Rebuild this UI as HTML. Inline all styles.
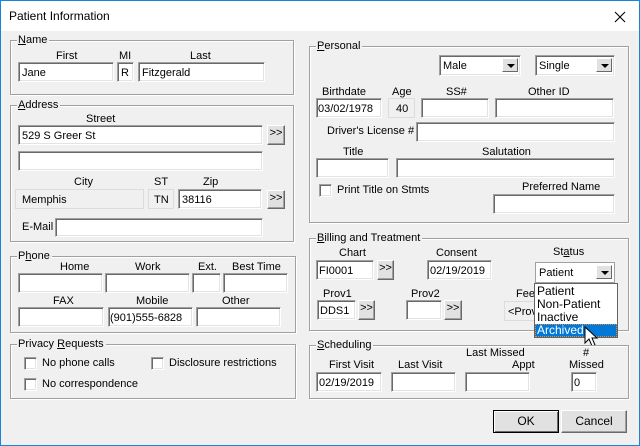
<!DOCTYPE html>
<html><head><style>
*{box-sizing:border-box;margin:0;padding:0}
body{width:640px;height:446px;overflow:hidden;background:#f0f0f0;font-family:"Liberation Sans",sans-serif;font-size:11px;color:#000;position:relative}
#frame{position:absolute;left:0;top:0;width:640px;height:446px;border:1px solid #1883d7;border-top:1px solid #1883d7}
#title{position:absolute;left:1px;top:1px;width:638px;height:30px;background:#fff}
#title span{position:absolute;left:8px;top:8px;font-size:12px}
.a{position:absolute;white-space:nowrap}
.g{position:absolute;border:1px solid #a0a0a0;box-shadow:1px 1px 0 #fff,inset 1px 1px 0 #fff}
.gl{position:absolute;top:-7px;left:6px;background:#f0f0f0;padding:0 2px 0 1px;line-height:12px}
.i{position:absolute;background:#fff;border:1px solid;border-color:#a0a0a0 #fff #fff #a0a0a0;box-shadow:inset 1px 1px 0 #696969,inset -1px -1px 0 #e3e3e3;padding:3px 0 0 3px;font-size:11px;line-height:14px;white-space:nowrap;overflow:hidden}
.d{background:#f0f0f0;box-shadow:none;border-color:#dcdcdc;}
.b{position:absolute;background:#e1e1e1;border:1px solid;border-color:#fff #696969 #696969 #fff;box-shadow:inset -1px -1px 0 #a0a0a0;font-size:11px;text-align:center;line-height:15px}
.c{position:absolute;width:13px;height:13px;background:#fff;border:1px solid;border-color:#a0a0a0 #fff #fff #a0a0a0;box-shadow:inset 1px 1px 0 #696969,inset -1px -1px 0 #e3e3e3}
.cb .ar{position:absolute;right:2px;top:2px;width:16px;height:14px;background:#e1e1e1;border:1px solid;border-color:#fff #696969 #696969 #fff}
.cb .ar:after{content:"";position:absolute;left:4px;top:5px;border-left:4px solid transparent;border-right:4px solid transparent;border-top:4px solid #000}
</style></head><body>
<div id="title"><span>Patient Information</span>
<svg style="position:absolute;left:613px;top:10px" width="12" height="12"><path d="M1 1L11 11M11 1L1 11" stroke="#000" stroke-width="1.1"/></svg></div>

<div class="g" style="left:10px;top:40px;width:284px;height:55px"><span class="gl"><u>N</u>ame</span></div>
<div class="a" style="left:56px;top:50px">First</div>
<div class="a" style="left:119px;top:50px">MI</div>
<div class="a" style="left:190px;top:50px">Last</div>
<div class="i" style="left:18px;top:62px;width:96px;height:20px">Jane</div>
<div class="i" style="left:117px;top:62px;width:17px;height:20px">R</div>
<div class="i" style="left:138px;top:62px;width:127px;height:20px">Fitzgerald</div>

<div class="g" style="left:10px;top:105px;width:284px;height:137px"><span class="gl"><u>A</u>ddress</span></div>
<div class="a" style="left:86px;top:113px">Street</div>
<div class="i" style="left:18px;top:125px;width:245px;height:20px">529 S Greer St</div>
<div class="b" style="left:267px;top:125px;width:18px;height:20px">&gt;&gt;</div>
<div class="i" style="left:18px;top:151px;width:245px;height:20px"></div>
<div class="a" style="left:74px;top:176px">City</div>
<div class="a" style="left:154px;top:176px">ST</div>
<div class="a" style="left:203px;top:176px">Zip</div>
<div class="i d" style="left:15px;top:189px;width:129px;height:20px;padding-left:6px">Memphis</div>
<div class="i d" style="left:148px;top:189px;width:26px;height:20px;padding-left:5px">TN</div>
<div class="i" style="left:178px;top:189px;width:84px;height:20px">38116</div>
<div class="b" style="left:267px;top:190px;width:18px;height:19px">&gt;&gt;</div>
<div class="a" style="left:22px;top:221px">E-Mail</div>
<div class="i" style="left:55px;top:218px;width:208px;height:19px"></div>

<div class="g" style="left:10px;top:256px;width:286px;height:77px"><span class="gl">P<u>h</u>one</span></div>
<div class="a" style="left:60px;top:261px">Home</div>
<div class="a" style="left:135px;top:261px">Work</div>
<div class="a" style="left:198px;top:261px">Ext.</div>
<div class="a" style="left:232px;top:261px">Best Time</div>
<div class="i" style="left:18px;top:273px;width:85px;height:20px"></div>
<div class="i" style="left:105px;top:273px;width:85px;height:20px"></div>
<div class="i" style="left:192px;top:273px;width:29px;height:20px"></div>
<div class="i" style="left:223px;top:273px;width:65px;height:20px"></div>
<div class="a" style="left:53px;top:295px">FAX</div>
<div class="a" style="left:136px;top:295px">Mobile</div>
<div class="a" style="left:222px;top:295px">Other</div>
<div class="i" style="left:18px;top:307px;width:86px;height:20px"></div>
<div class="i" style="left:108px;top:307px;width:85px;height:20px;padding-left:1px">(901)555-6828</div>
<div class="i" style="left:196px;top:307px;width:85px;height:20px"></div>

<div class="g" style="left:10px;top:344px;width:286px;height:55px"><span class="gl">Privacy <u>R</u>equests</span></div>
<div class="c" style="left:24px;top:357px"></div><div class="a" style="left:42px;top:357px">No phone calls</div>
<div class="c" style="left:151px;top:357px"></div><div class="a" style="left:169px;top:357px">Disclosure restrictions</div>
<div class="c" style="left:24px;top:378px"></div><div class="a" style="left:42px;top:378px">No correspondence</div>

<div class="g" style="left:309px;top:46px;width:320px;height:177px"><span class="gl"><u>P</u>ersonal</span></div>
<div class="i cb" style="left:439px;top:55px;width:82px;height:21px">Male<div class="ar"></div></div>
<div class="i cb" style="left:535px;top:55px;width:80px;height:21px">Single<div class="ar"></div></div>
<div class="a" style="left:322px;top:86px">Birthdate</div>
<div class="a" style="left:392px;top:86px">Age</div>
<div class="a" style="left:446px;top:86px">SS#</div>
<div class="a" style="left:528px;top:86px">Other ID</div>
<div class="i" style="left:316px;top:98px;width:66px;height:20px;padding-left:1px">03/02/1978</div>
<div class="i d" style="left:388px;top:98px;width:27px;height:20px;padding-left:7px">40</div>
<div class="i" style="left:421px;top:98px;width:68px;height:20px"></div>
<div class="i" style="left:495px;top:98px;width:119px;height:20px"></div>
<div class="a" style="left:327px;top:125px">Driver's License #</div>
<div class="i" style="left:416px;top:122px;width:199px;height:20px"></div>
<div class="a" style="left:343px;top:146px">Title</div>
<div class="a" style="left:482px;top:146px">Salutation</div>
<div class="i" style="left:316px;top:158px;width:73px;height:20px"></div>
<div class="i" style="left:396px;top:158px;width:219px;height:20px"></div>
<div class="c" style="left:319px;top:184px"></div><div class="a" style="left:337px;top:184px">Print Title on Stmts</div>
<div class="a" style="left:522px;top:181px">Preferred Name</div>
<div class="i" style="left:493px;top:194px;width:122px;height:20px"></div>

<div class="g" style="left:309px;top:238px;width:320px;height:93px"><span class="gl"><u>B</u>illing and Treatment</span></div>
<div class="a" style="left:339px;top:247px">Chart</div>
<div class="a" style="left:436px;top:247px">Consent</div>
<div class="a" style="left:553px;top:246px">St<u>a</u>tus</div>
<div class="i" style="left:316px;top:260px;width:58px;height:20px;padding-left:2px">FI0001</div>
<div class="b" style="left:377px;top:260px;width:17px;height:20px">&gt;&gt;</div>
<div class="i" style="left:427px;top:260px;width:65px;height:20px;padding-left:2px">02/19/2019</div>
<div class="i cb" style="left:535px;top:262px;width:80px;height:21px;border-color:#a0a0a0;box-shadow:none;padding-left:3px">Patient<div class="ar" style="top:2px"></div></div>
<div class="a" style="left:323px;top:288px">Prov1</div>
<div class="a" style="left:411px;top:288px">Prov2</div>
<div class="a" style="left:516px;top:288px">Fee</div>
<div class="i" style="left:317px;top:300px;width:39px;height:20px;padding-left:2px">DDS1</div>
<div class="b" style="left:358px;top:300px;width:17px;height:20px">&gt;&gt;</div>
<div class="i" style="left:406px;top:300px;width:36px;height:20px"></div>
<div class="b" style="left:444px;top:300px;width:18px;height:20px">&gt;&gt;</div>
<div class="i d" style="left:504px;top:301px;width:40px;height:20px;padding-left:3px">&lt;Prov</div>
<div class="a" style="left:534px;top:283px;width:84px;height:55px;background:#fff;border:1px solid #646464;font-size:12px;line-height:13px;padding-top:1px">
<div style="padding-left:2px">Patient</div><div style="padding-left:2px">Non-Patient</div><div style="padding-left:2px">Inactive</div>
<div style="background:#0078d7;color:#fff;padding-left:2px;outline:1px dotted #e08a3a;outline-offset:-1px">Archived</div></div>
<svg class="a" style="left:584px;top:326px" width="14" height="22"><path d="M1 1V17L5 13L8 20L11 19L8 12H13Z" fill="#fff" stroke="#000" stroke-width="1"/></svg>

<div class="g" style="left:309px;top:345px;width:320px;height:54px"><span class="gl"><u>S</u>cheduling</span></div>
<div class="a" style="left:329px;top:359px">First Visit</div>
<div class="a" style="left:398px;top:359px">Last Visit</div>
<div class="a" style="left:466px;top:347px">Last Missed</div>
<div class="a" style="left:512px;top:359px">Appt</div>
<div class="a" style="left:583px;top:347px">#</div>
<div class="a" style="left:569px;top:359px">Missed</div>
<div class="i" style="left:316px;top:372px;width:66px;height:20px;padding-left:2px">02/19/2019</div>
<div class="i" style="left:391px;top:372px;width:65px;height:20px"></div>
<div class="i" style="left:465px;top:372px;width:65px;height:20px"></div>
<div class="i" style="left:571px;top:372px;width:26px;height:20px;padding-left:2px">0</div>

<div class="b" style="left:493px;top:410px;width:66px;height:23px;border:1px solid #000;box-shadow:inset 1px 1px 0 #fff,inset -1px -1px 0 #696969;line-height:20px;font-size:12px">OK</div>
<div class="b" style="left:561px;top:410px;width:66px;height:23px;line-height:20px;font-size:12px">Cancel</div>
<div id="frame"></div>
</body></html>
